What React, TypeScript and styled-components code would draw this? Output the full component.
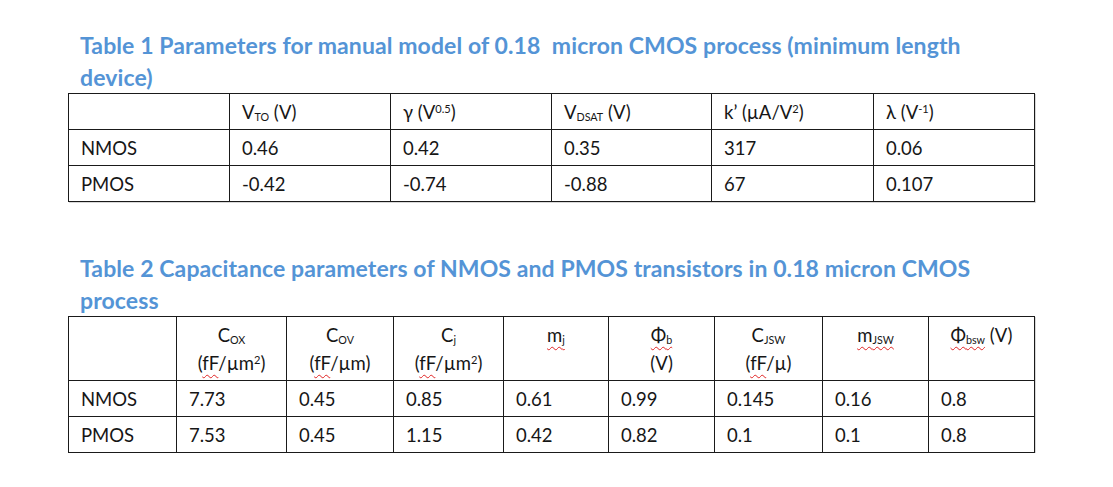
import styled, { createGlobalStyle } from "styled-components";

const GlobalStyle = createGlobalStyle`
  body {
    margin: 0;
    background: #ffffff;
  }
`;

const Page = styled.div`
  padding: 29px 0 0 68px;
  font-family: Lato, "Open Sans", sans-serif;
  color: #161616;
`;

const Caption = styled.h2<{ $gap?: number }>`
  margin: ${(p) => p.$gap ?? 0}px 0 0;
  padding-left: 12px;
  font-size: 23px;
  line-height: 32px;
  font-weight: 700;
  letter-spacing: 0.1px;
  color: #5494d6;
  white-space: pre;
`;

const Grid = styled.table<{ $width: number }>`
  border-collapse: collapse;
  table-layout: fixed;
  width: ${(p) => p.$width}px;
  font-size: 18.5px;
  box-shadow: 1px 1px 0 #d8d8d8;
`;

const Cell = styled.td<{ $center?: boolean }>`
  border: 1px solid #1a1a1a;
  padding: 4px 12px 3px;
  line-height: 28px;
  text-align: ${(p) => (p.$center ? "center" : "left")};
  vertical-align: top;
  white-space: nowrap;
`;

const Line = styled.div``;

const Sub = styled.span<{ $caps?: boolean }>`
  font-size: 0.58em;
  line-height: 0;
  vertical-align: -0.15em;
  text-transform: ${(p) => (p.$caps ? "uppercase" : "none")};
`;

const Sup = styled.sup`
  font-size: 0.6em;
  line-height: 0;
  vertical-align: 0.55em;
`;

const Misspelled = styled.span`
  text-decoration: underline wavy #e02424;
  text-decoration-thickness: 1px;
  text-underline-offset: 4px;
  text-decoration-skip-ink: none;
`;

const table1 = [
  ["NMOS", "0.46", "0.42", "0.35", "317", "0.06"],
  ["PMOS", "-0.42", "-0.74", "-0.88", "67", "0.107"],
];

const table2 = [
  ["NMOS", "7.73", "0.45", "0.85", "0.61", "0.99", "0.145", "0.16", "0.8"],
  ["PMOS", "7.53", "0.45", "1.15", "0.42", "0.82", "0.1", "0.1", "0.8"],
];

const widths1 = [161, 161, 161, 160, 162, 161];
const widths2 = [108, 110, 107, 110, 105, 106, 108, 106, 106];

const FF = () => <Misspelled>fF</Misspelled>;

const App = () => {
  return (
    <Page>
      <GlobalStyle />
      <Caption>
        {"Table 1 Parameters for manual model of 0.18  micron CMOS process (minimum length"}
        <br />
        device)
      </Caption>
      <Grid $width={966}>
        <colgroup>
          {widths1.map((w, i) => (
            <col key={i} style={{ width: w }} />
          ))}
        </colgroup>
        <tbody>
          <tr>
            <Cell />
            <Cell>
              V<Sub $caps>to</Sub> (V)
            </Cell>
            <Cell>
              γ (V<Sup>0.5</Sup>)
            </Cell>
            <Cell>
              V<Sub $caps>dsat</Sub> (V)
            </Cell>
            <Cell>
              k’ (µA/V<Sup>2</Sup>)
            </Cell>
            <Cell>
              λ (V<Sup>-1</Sup>)
            </Cell>
          </tr>
          {table1.map((row) => (
            <tr key={row[0]}>
              {row.map((v, i) => (
                <Cell key={i}>{v}</Cell>
              ))}
            </tr>
          ))}
        </tbody>
      </Grid>

      <Caption $gap={50}>
        Table 2 Capacitance parameters of NMOS and PMOS transistors in 0.18 micron CMOS
        <br />
        process
      </Caption>
      <Grid $width={966}>
        <colgroup>
          {widths2.map((w, i) => (
            <col key={i} style={{ width: w }} />
          ))}
        </colgroup>
        <tbody>
          <tr>
            <Cell />
            <Cell $center>
              <Line>
                C<Sub $caps>ox</Sub>
              </Line>
              <Line>
                (<FF />/µm<Sup>2</Sup>)
              </Line>
            </Cell>
            <Cell $center>
              <Line>
                C<Sub $caps>ov</Sub>
              </Line>
              <Line>
                (<FF />/µm)
              </Line>
            </Cell>
            <Cell $center>
              <Line>
                C<Sub>j</Sub>
              </Line>
              <Line>
                (<FF />/µm<Sup>2</Sup>)
              </Line>
            </Cell>
            <Cell $center>
              <Line>
                <Misspelled>
                  m<Sub>j</Sub>
                </Misspelled>
              </Line>
            </Cell>
            <Cell $center>
              <Line>
                <Misspelled>
                  Φ<Sub>b</Sub>
                </Misspelled>
              </Line>
              <Line>(V)</Line>
            </Cell>
            <Cell $center>
              <Line>
                C<Sub $caps>jsw</Sub>
              </Line>
              <Line>
                (<FF />/µ)
              </Line>
            </Cell>
            <Cell $center>
              <Line>
                <Misspelled>
                  m<Sub $caps>jsw</Sub>
                </Misspelled>
              </Line>
            </Cell>
            <Cell $center>
              <Line>
                <Misspelled>
                  Φ<Sub>bsw</Sub>
                </Misspelled>{" "}
                (V)
              </Line>
            </Cell>
          </tr>
          {table2.map((row) => (
            <tr key={row[0]}>
              {row.map((v, i) => (
                <Cell key={i}>{v}</Cell>
              ))}
            </tr>
          ))}
        </tbody>
      </Grid>
    </Page>
  );
};

export default App;
